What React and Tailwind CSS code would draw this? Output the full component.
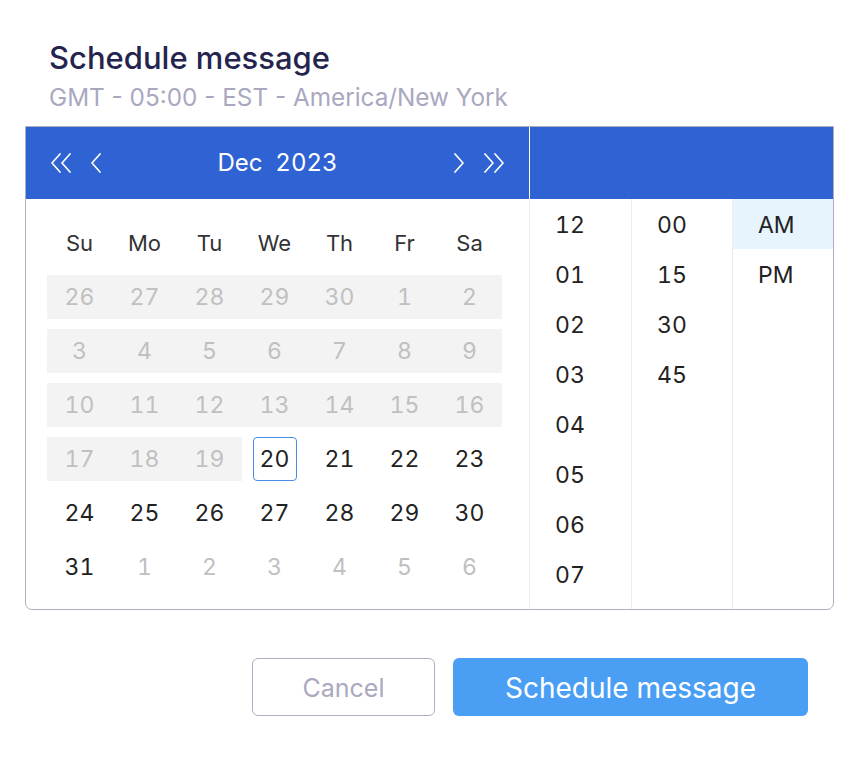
import React from "react";

const blue = "bg-[#2f63d3]";

function Chevron({ dir = "left", double = false }) {
  const w = double ? 22 : 12;
  const pts = (x) =>
    dir === "left"
      ? `${x + 9},1 ${x + 1},10 ${x + 9},19`
      : `${x + 1},1 ${x + 9},10 ${x + 1},19`;
  return (
    <svg width={w} height="20" viewBox={`0 0 ${w} 20`} fill="none">
      <polyline points={pts(1)} stroke="white" strokeWidth="1.7" strokeLinecap="round" strokeLinejoin="round" />
      {double && (
        <polyline points={pts(11)} stroke="white" strokeWidth="1.7" strokeLinecap="round" strokeLinejoin="round" />
      )}
    </svg>
  );
}

const dayNames = ["Su", "Mo", "Tu", "We", "Th", "Fr", "Sa"];

// Calendar cells: [label, state]; state: "off" = disabled (gray band), "out" = next month, "on" = selectable
const weeks = [
  [26, 27, 28, 29, 30, 1, 2].map((d) => [d, "off"]),
  [3, 4, 5, 6, 7, 8, 9].map((d) => [d, "off"]),
  [10, 11, 12, 13, 14, 15, 16].map((d) => [d, "off"]),
  [[17, "off"], [18, "off"], [19, "off"], [20, "sel"], [21, "on"], [22, "on"], [23, "on"]],
  [24, 25, 26, 27, 28, 29, 30].map((d) => [d, "on"]),
  [[31, "on"], [1, "out"], [2, "out"], [3, "out"], [4, "out"], [5, "out"], [6, "out"]],
];

const hours = ["12", "01", "02", "03", "04", "05", "06", "07"];
const minutes = ["00", "15", "30", "45"];
const meridiem = ["AM", "PM"];

function TimeColumn({ items, active, first }) {
  return (
    <div className={`w-[101px] h-full ${first ? "" : "border-l border-[#ececf0]"}`}>
      {items.map((t) => (
        <div
          key={t}
          className={`h-[50px] flex items-center pl-[25px] pt-[2px] text-[23px] tabular-nums text-[#222] ${
            t === active ? "bg-[#e7f4fd]" : ""
          }`}
        >
          {t}
        </div>
      ))}
    </div>
  );
}

export default function App() {
  return (
    <div className="w-[856px] h-[784px] bg-white font-['Inter',sans-serif] pt-[40px] px-[25px]">
      <div className="pl-[24px]">
        <h1 className="text-[31px] leading-[36px] font-medium text-[#25244f]">Schedule message</h1>
        <p className="text-[24.3px] leading-[30px] text-[#a9a8bf] mt-[6px]">GMT - 05:00 - EST - America/New York</p>
      </div>

      <div className="mt-[14px] w-[809px] border border-[#aeadc2] rounded-b-[7px] flex overflow-hidden">
        {/* date side */}
        <div className="w-[504px] flex flex-col">
          <div className={`${blue} h-[72px] flex items-center px-[24px] text-white`}>
            <div className="flex items-center gap-[18px]">
              <Chevron dir="left" double />
              <Chevron dir="left" />
            </div>
            <div className="flex-1 text-center text-[24px] leading-none tabular-nums">Dec&nbsp;&nbsp;2023</div>
            <div className="flex items-center gap-[18px]">
              <Chevron dir="right" />
              <Chevron dir="right" double />
            </div>
          </div>
          <div className="h-[410px] pt-[22px] px-[21px] flex flex-col gap-[10px]">
            <div className="grid grid-cols-7 h-[44px] w-[455px] items-center">
              {dayNames.map((d) => (
                <div key={d} className="text-center text-[22px] text-[#333]">
                  {d}
                </div>
              ))}
            </div>
            {weeks.map((week, i) => (
              <div key={i} className="grid grid-cols-7 h-[44px] w-[455px]">
                {week.map(([d, s], j) => (
                  <div
                    key={j}
                    className={`flex items-center justify-center text-[23px] tabular-nums ${
                      s === "off" ? "bg-[#f3f3f3] text-[#c0c0c0]" : s === "out" ? "text-[#c0c0c0]" : "text-[#222]"
                    }`}
                  >
                    {s === "sel" ? (
                      <span className="w-[44px] h-[44px] flex items-center justify-center border border-[#4a8be8] rounded-[4px]">
                        {d}
                      </span>
                    ) : (
                      d
                    )}
                  </div>
                ))}
              </div>
            ))}
          </div>
        </div>

        {/* time side */}
        <div className="flex-1 flex flex-col">
          <div className={`${blue} h-[72px] border-l border-white`} />
          <div className="h-[410px] flex border-l border-[#ececf0]">
            <TimeColumn items={hours} first />
            <TimeColumn items={minutes} />
            <TimeColumn items={meridiem} active="AM" />
          </div>
        </div>
      </div>

      <div className="mt-[48px] flex justify-end gap-[18px] pr-[23px]">
        <button className="w-[183px] h-[58px] pt-[4px] border border-[#b0aec3] rounded-[6px] text-[25px] text-[#aaa9c0] bg-white">
          Cancel
        </button>
        <button className="w-[355px] h-[58px] pt-[2px] rounded-[6px] text-[28px] text-white bg-[#4a9ff5]">
          Schedule message
        </button>
      </div>
    </div>
  );
}
